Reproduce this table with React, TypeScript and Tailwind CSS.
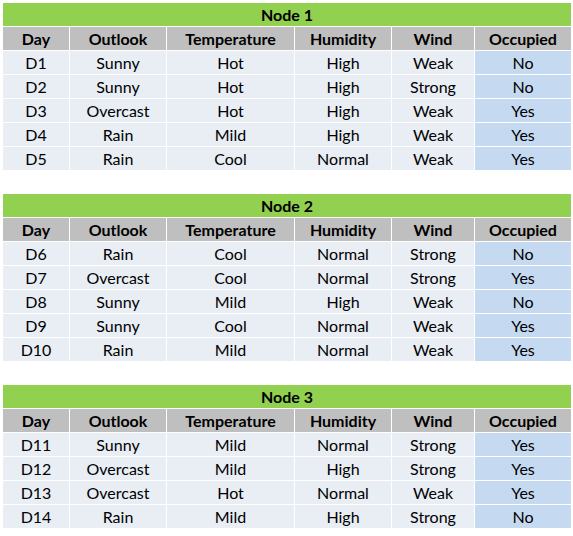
const columns = ["Day", "Outlook", "Temperature", "Humidity", "Wind", "Occupied"];

type Row = [string, string, string, string, string, string];

const nodes: { title: string; rows: Row[] }[] = [
  {
    title: "Node 1",
    rows: [
      ["D1", "Sunny", "Hot", "High", "Weak", "No"],
      ["D2", "Sunny", "Hot", "High", "Strong", "No"],
      ["D3", "Overcast", "Hot", "High", "Weak", "Yes"],
      ["D4", "Rain", "Mild", "High", "Weak", "Yes"],
      ["D5", "Rain", "Cool", "Normal", "Weak", "Yes"],
    ],
  },
  {
    title: "Node 2",
    rows: [
      ["D6", "Rain", "Cool", "Normal", "Strong", "No"],
      ["D7", "Overcast", "Cool", "Normal", "Strong", "Yes"],
      ["D8", "Sunny", "Mild", "High", "Weak", "No"],
      ["D9", "Sunny", "Cool", "Normal", "Weak", "Yes"],
      ["D10", "Rain", "Mild", "Normal", "Weak", "Yes"],
    ],
  },
  {
    title: "Node 3",
    rows: [
      ["D11", "Sunny", "Mild", "Normal", "Strong", "Yes"],
      ["D12", "Overcast", "Mild", "High", "Strong", "Yes"],
      ["D13", "Overcast", "Hot", "Normal", "Weak", "Yes"],
      ["D14", "Rain", "Mild", "High", "Strong", "No"],
    ],
  },
];

function NodeTable({ title, rows }: { title: string; rows: Row[] }) {
  return (
    <div className="grid w-[568px] grid-cols-[66px_96px_127px_96px_82px_96px] gap-x-px gap-y-px bg-white text-[16px] leading-none text-black">
      <div className="col-span-6 flex h-[23px] items-center justify-center bg-[#92d050] font-bold">{title}</div>
      {columns.map((c) => (
        <div key={c} className="flex h-[23px] items-center justify-center bg-[#bfbfbf] font-bold">
          {c}
        </div>
      ))}
      {rows.map((r) =>
        r.map((v, i) => (
          <div
            key={r[0] + i}
            className={
              "flex h-[23px] items-center justify-center " + (i === 5 ? "bg-[#c5d9f1]" : "bg-[#e9edf4]")
            }
          >
            {v}
          </div>
        )),
      )}
    </div>
  );
}

export default function App() {
  return (
    <div className="flex h-[536px] w-[573px] flex-col gap-6 bg-white pl-[3px] pt-[3px] font-['Lato',sans-serif]">
      {nodes.map((n) => (
        <NodeTable key={n.title} title={n.title} rows={n.rows} />
      ))}
    </div>
  );
}
